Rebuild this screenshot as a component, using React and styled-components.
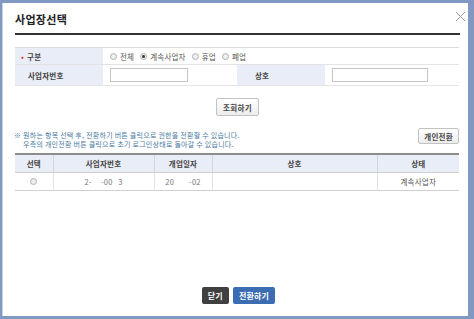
import React from "react";
import styled, { createGlobalStyle } from "styled-components";

const Global = createGlobalStyle`
  html, body { margin: 0; padding: 0; }
  body { font-family: "Noto Sans CJK KR", "Noto Sans", sans-serif; }
  * { box-sizing: border-box; }
`;

const Frame = styled.div`
  width: 474px;
  height: 319px;
  background: #8098c2;
  padding: 3px 6px 3px 2px;
  display: flex;
`;

const Window = styled.div`
  flex: 1;
  background: #fff;
  border-left: 1px solid #c9d3e3;
  display: flex;
  flex-direction: column;
  padding: 0 8px 0 12px;
`;

const Header = styled.div`
  height: 32px;
  display: flex;
  align-items: center;
  justify-content: space-between;
  border-bottom: 2px solid #333;
  padding-top: 2px;
`;

const Title = styled.h1`
  margin: 0;
  font-size: 11px;
  font-weight: 700;
  color: #222;
  letter-spacing: 0.3px;
`;

const Close = styled.button`
  border: 0;
  background: none;
  padding: 0;
  margin-right: -6px;
  margin-top: -6px;
  width: 11px;
  height: 11px;
  display: flex;
`;

const FormTable = styled.table`
  margin-top: 12px;
  width: 444px;
  border-collapse: collapse;
  table-layout: fixed;
  border-top: 1px solid #dcdcdc;
  font-size: 7.5px;
  color: #444;
`;

const Row = styled.tr`
  height: ${(p) => p.$h}px;
  border-bottom: 1px solid #e3e3e3;
`;

const Label = styled.th`
  background: #e9edf7;
  text-align: left;
  font-weight: 700;
  color: #444;
  padding: 0 0 0 ${(p) => p.$pad || 13}px;
  letter-spacing: 0.2px;
`;

const Req = styled.span`
  color: #d33;
  margin-left: -7px;
  margin-right: 3px;
`;

const Value = styled.td`
  padding: 0 0 0 7px;
`;

const Radios = styled.div`
  display: flex;
  align-items: center;
  gap: 6px;
`;

const RadioItem = styled.label`
  display: flex;
  align-items: center;
  gap: 3px;
  color: #555;
  letter-spacing: 0.2px;
`;

const Radio = styled.span`
  width: 7px;
  height: 7px;
  border-radius: 50%;
  border: 1px solid #b5b5b5;
  background: radial-gradient(circle, ${(p) => (p.$on ? "#444 0, #444 1.3px, #eee 1.6px" : "#f4f4f4 0, #e2e2e2 100%")});
  display: inline-block;
`;

const Input = styled.div`
  width: ${(p) => p.$w}px;
  height: 14px;
  border: 1px solid #c4c4c4;
  background: #fff;
`;

const Center = styled.div`
  display: flex;
  justify-content: center;
  margin-top: 12px;
`;

const GrayButton = styled.button`
  height: 18px;
  padding: 0 6px;
  border: 1px solid #c2c2c2;
  border-radius: 2px;
  background: linear-gradient(#ffffff, #ececec);
  font-family: inherit;
  font-size: 7.5px;
  font-weight: 700;
  color: #444;
  letter-spacing: 0.3px;
  display: flex;
  align-items: center;
`;

const NoteRow = styled.div`
  margin-top: 12px;
  display: flex;
  justify-content: space-between;
  align-items: flex-start;
  width: 444px;
`;

const Notes = styled.div`
  padding-top: 3px;
  font-size: 7px;
  line-height: 9px;
  color: #4a7aa3;
  letter-spacing: 0.25px;
  margin-left: -1px;
`;

const NoteLine = styled.div`
  padding-left: ${(p) => p.$indent || 0}px;
  white-space: nowrap;
`;

const SmallButton = styled(GrayButton)`
  height: 16px;
  padding: 0 5px;
`;

const ResultTable = styled.table`
  margin-top: 4px;
  width: 444px;
  border-collapse: collapse;
  table-layout: fixed;
  border-top: 2px solid #8c8c8c;
  font-size: 7.5px;
  color: #555;
`;

const HeadCell = styled.th`
  height: 18px;
  background: #e9edf7;
  font-weight: 700;
  color: #444;
  letter-spacing: 0.2px;
  border-bottom: 1px solid #cfcfcf;
  border-left: ${(p) => (p.$first ? "0" : "1px solid #d6d6d6")};
  padding: 0;
`;

const Cell = styled.td`
  height: 18px;
  text-align: center;
  border-bottom: 1px solid #d0d0d0;
  border-left: ${(p) => (p.$first ? "0" : "1px solid #e2e2e2")};
  padding: 0;
  white-space: pre;
  letter-spacing: 0.2px;
`;

const Faint = styled.span`
  color: #777;
`;

const Spacer = styled.div`
  flex: 1;
`;

const Footer = styled.div`
  display: flex;
  justify-content: center;
  gap: 4px;
  padding-bottom: 12px;
  margin-left: 2px;
`;

const SolidButton = styled.button`
  height: 17px;
  padding: 0 6px;
  border: 0;
  border-radius: 2px;
  background: ${(p) => p.$bg};
  color: #fff;
  font-family: inherit;
  font-size: 8px;
  font-weight: 700;
  letter-spacing: 0.2px;
  display: flex;
  align-items: center;
`;

export default function App() {
  return (
    <>
      <Global />
      <Frame>
        <Window>
          <Header>
            <Title>사업장선택</Title>
            <Close aria-label="닫기">
              <svg width="11" height="11" viewBox="0 0 11 11">
                <path d="M1 1 L10 10 M10 1 L1 10" stroke="#9a9a9a" strokeWidth="1" />
              </svg>
            </Close>
          </Header>

          <FormTable>
            <colgroup>
              <col style={{ width: 88 }} />
              <col style={{ width: 134 }} />
              <col style={{ width: 88 }} />
              <col style={{ width: 134 }} />
            </colgroup>
            <tbody>
              <Row $h={17}>
                <Label>
                  <Req>•</Req>구분
                </Label>
                <Value colSpan={3}>
                  <Radios>
                    <RadioItem><Radio />전체</RadioItem>
                    <RadioItem><Radio $on />계속사업자</RadioItem>
                    <RadioItem><Radio />휴업</RadioItem>
                    <RadioItem><Radio />폐업</RadioItem>
                  </Radios>
                </Value>
              </Row>
              <Row $h={21}>
                <Label>사업자번호</Label>
                <Value><Input $w={78} /></Value>
                <Label $pad={18}>상호</Label>
                <Value><Input $w={96} /></Value>
              </Row>
            </tbody>
          </FormTable>

          <Center>
            <GrayButton>조회하기</GrayButton>
          </Center>

          <NoteRow>
            <Notes>
              <NoteLine>※ 원하는 항목 선택 후, 전환하기 버튼 클릭으로 권한을 전환할 수 있습니다.</NoteLine>
              <NoteLine $indent={9}>우측의 개인전환 버튼 클릭으로 초기 로그인상태로 돌아갈 수 있습니다.</NoteLine>
            </Notes>
            <SmallButton>개인전환</SmallButton>
          </NoteRow>

          <ResultTable>
            <colgroup>
              <col style={{ width: 38 }} />
              <col style={{ width: 101 }} />
              <col style={{ width: 58 }} />
              <col style={{ width: 165 }} />
              <col style={{ width: 82 }} />
            </colgroup>
            <thead>
              <tr>
                <HeadCell $first>선택</HeadCell>
                <HeadCell>사업자번호</HeadCell>
                <HeadCell>개업일자</HeadCell>
                <HeadCell>상호</HeadCell>
                <HeadCell>상태</HeadCell>
              </tr>
            </thead>
            <tbody>
              <tr>
                <Cell $first><Radio /></Cell>
                <Cell><Faint>{"2-     -00   3"}</Faint></Cell>
                <Cell><Faint>{"20        -02"}</Faint></Cell>
                <Cell />
                <Cell>계속사업자</Cell>
              </tr>
            </tbody>
          </ResultTable>

          <Spacer />

          <Footer>
            <SolidButton $bg="#404040">닫기</SolidButton>
            <SolidButton $bg="#3c6db3">전환하기</SolidButton>
          </Footer>
        </Window>
      </Frame>
    </>
  );
}
